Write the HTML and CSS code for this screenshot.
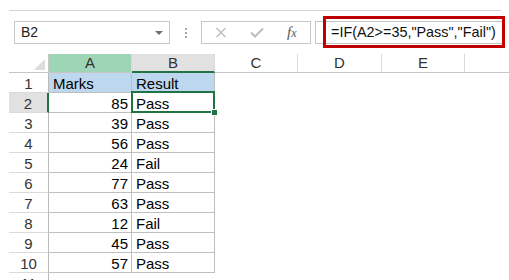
FILE: index.html
```html
<!DOCTYPE html>
<html>
<head>
<meta charset="utf-8">
<link rel="stylesheet" href="styles.css">
</head>
<body>
<div class="app">
  <div class="top-rule"></div>
  <div class="formula-bar">
    <div class="name-box">
      <span class="name-text">B2</span>
      <span class="name-arrow"></span>
    </div>
    <div class="grip"><i></i><i></i><i></i></div>
    <div class="fx-buttons">
      <svg class="btn-icon" width="12" height="11" viewBox="0 0 12 11"><path d="M1.5 1 L10.5 10 M10.5 1 L1.5 10" stroke="#bdbdbd" stroke-width="1.4" fill="none"/></svg>
      <svg class="btn-icon" width="14" height="11" viewBox="0 0 14 11"><path d="M1 5.5 L5 9.5 L13 1.5" stroke="#bdbdbd" stroke-width="2" fill="none"/></svg>
      <span class="fx">f<span class="fx-x">x</span></span>
    </div>
    <div class="formula-input">
      <span class="formula-text">=IF(A2&gt;=35,"Pass","Fail")</span>
      <div class="callout"></div>
    </div>
  </div>

  <div class="grid">
    <div class="corner"><svg width="11" height="11" viewBox="0 0 11 11"><path d="M11 0 L11 11 L0 11 Z" fill="#dcdcdc"/></svg></div>
    <div class="colhead col-a">A</div>
    <div class="colhead col-b">B</div>
    <div class="colhead">C</div>
    <div class="colhead">D</div>
    <div class="colhead">E</div>
    <div class="colhead last"></div>

    <div class="rowhead">1</div>
    <div class="cell bordered txt label">Marks</div>
    <div class="cell bordered txt label">Result</div>
    <div class="cell"></div><div class="cell"></div><div class="cell"></div><div class="cell"></div>

    <div class="rowhead current">2</div>
    <div class="cell bordered num">85</div>
    <div class="cell bordered txt">Pass</div>
    <div class="cell"></div><div class="cell"></div><div class="cell"></div><div class="cell"></div>

    <div class="rowhead">3</div>
    <div class="cell bordered num">39</div>
    <div class="cell bordered txt">Pass</div>
    <div class="cell"></div><div class="cell"></div><div class="cell"></div><div class="cell"></div>

    <div class="rowhead">4</div>
    <div class="cell bordered num">56</div>
    <div class="cell bordered txt">Pass</div>
    <div class="cell"></div><div class="cell"></div><div class="cell"></div><div class="cell"></div>

    <div class="rowhead">5</div>
    <div class="cell bordered num">24</div>
    <div class="cell bordered txt">Fail</div>
    <div class="cell"></div><div class="cell"></div><div class="cell"></div><div class="cell"></div>

    <div class="rowhead">6</div>
    <div class="cell bordered num">77</div>
    <div class="cell bordered txt">Pass</div>
    <div class="cell"></div><div class="cell"></div><div class="cell"></div><div class="cell"></div>

    <div class="rowhead">7</div>
    <div class="cell bordered num">63</div>
    <div class="cell bordered txt">Pass</div>
    <div class="cell"></div><div class="cell"></div><div class="cell"></div><div class="cell"></div>

    <div class="rowhead">8</div>
    <div class="cell bordered num">12</div>
    <div class="cell bordered txt">Fail</div>
    <div class="cell"></div><div class="cell"></div><div class="cell"></div><div class="cell"></div>

    <div class="rowhead">9</div>
    <div class="cell bordered num">45</div>
    <div class="cell bordered txt">Pass</div>
    <div class="cell"></div><div class="cell"></div><div class="cell"></div><div class="cell"></div>

    <div class="rowhead">10</div>
    <div class="cell bordered num">57</div>
    <div class="cell bordered txt">Pass</div>
    <div class="cell"></div><div class="cell"></div><div class="cell"></div><div class="cell"></div>

    <div class="rowhead">11</div>
    <div class="cell"></div><div class="cell"></div><div class="cell"></div><div class="cell"></div><div class="cell"></div><div class="cell"></div>

    <div class="selection"><div class="fill-handle"></div></div>
  </div>
</div>
</body>
</html>
```

FILE: styles.css
```css
html, body {
  margin: 0;
  padding: 0;
  background: #ffffff;
  overflow: hidden;
}

.app {
  width: 509px;
  height: 280px;
  overflow: hidden;
  font-family: "Liberation Sans", Arial, sans-serif;
  color: #000;
}

.top-rule {
  margin: 10px 0 0 9px;
  width: 492px;
  height: 1px;
  background: #d4d4d4;
}

.formula-bar {
  display: flex;
  align-items: center;
  height: 23px;
  margin-top: 10px;
  padding-left: 14px;
}

.name-box {
  box-sizing: border-box;
  width: 156px;
  height: 23px;
  border: 1px solid #c6c6c6;
  display: flex;
  align-items: center;
  justify-content: space-between;
  padding: 0 6px 0 6px;
}

.name-text {
  font-size: 14px;
  color: #222;
  line-height: 21px;
}

.name-arrow {
  width: 0;
  height: 0;
  border-left: 4px solid transparent;
  border-right: 4px solid transparent;
  border-top: 4px solid #707070;
  margin-top: 1px;
}

.grip {
  width: 2px;
  margin: 0 14px 0 15px;
  display: flex;
  flex-direction: column;
  gap: 2px;
}

.grip i {
  display: block;
  width: 2px;
  height: 2px;
  background: #a3acab;
}

.fx-buttons {
  box-sizing: border-box;
  width: 110px;
  height: 23px;
  border: 1px solid #c6c6c6;
  display: flex;
  align-items: center;
  padding-left: 13px;
}

.btn-icon {
  display: block;
}

.btn-icon + .btn-icon {
  margin-left: 23px;
}

.fx {
  margin-left: 23px;
  font-family: "Liberation Serif", "Times New Roman", serif;
  font-style: italic;
  font-size: 15px;
  color: #555;
  line-height: 21px;
}

.fx-x {
  font-size: 12px;
}

.formula-input {
  position: relative;
  box-sizing: border-box;
  width: 188px;
  height: 23px;
  margin-left: 4px;
  border: 1px solid #c6c6c6;
  padding-left: 15px;
  display: flex;
  align-items: center;
}

.formula-text {
  font-size: 14.4px;
  line-height: 21px;
  color: #111;
  white-space: nowrap;
}

.callout {
  position: absolute;
  left: 7px;
  top: -6px;
  width: 182px;
  height: 32px;
  box-sizing: border-box;
  border: 3px solid #c00000;
}

.grid {
  position: relative;
  margin: 10px 0 0 9px;
  display: grid;
  grid-template-columns: 40px 83px 83px 83px 84px 83px 1fr;
  grid-template-rows: 19px repeat(11, 20px);
  font-size: 15px;
}

.corner {
  box-sizing: border-box;
  border-right: 1px solid #c6c6c6;
  border-bottom: 1px solid #c6c6c6;
  display: flex;
  justify-content: flex-end;
  align-items: flex-end;
  padding: 0 3px 2px 0;
}

.corner svg {
  display: block;
}

.colhead {
  box-sizing: border-box;
  border-right: 1px solid #dadada;
  border-bottom: 1px solid #c6c6c6;
  text-align: center;
  line-height: 18px;
  color: #333;
}

.colhead.last {
  border-right: none;
}

.col-a {
  background: #9fd5b7;
}

.col-b {
  background: #e1e1e1;
  border-bottom: 2px solid #217346;
}

.rowhead {
  box-sizing: border-box;
  border-right: 1px solid #bababa;
  border-bottom: 1px solid #dadada;
  text-align: center;
  line-height: 21px;
  color: #333;
}

.rowhead.current {
  background: #e1e1e1;
  border-right: 2px solid #217346;
}

.cell {
  box-sizing: border-box;
  line-height: 21px;
  white-space: nowrap;
}

.cell.bordered {
  border-right: 1px solid #bfbfbf;
  border-bottom: 1px solid #bfbfbf;
}

.cell.num {
  text-align: right;
  padding-right: 3px;
}

.cell.txt {
  padding-left: 4px;
}

.cell.label {
  background: #bdd7ee;
}

.selection {
  position: absolute;
  left: 122px;
  top: 37px;
  width: 84px;
  height: 22px;
  box-sizing: border-box;
  border: 2px solid #217346;
  pointer-events: none;
}

.fill-handle {
  position: absolute;
  right: -5px;
  bottom: -5px;
  width: 5px;
  height: 5px;
  background: #217346;
  border: 1px solid #ffffff;
}
```
